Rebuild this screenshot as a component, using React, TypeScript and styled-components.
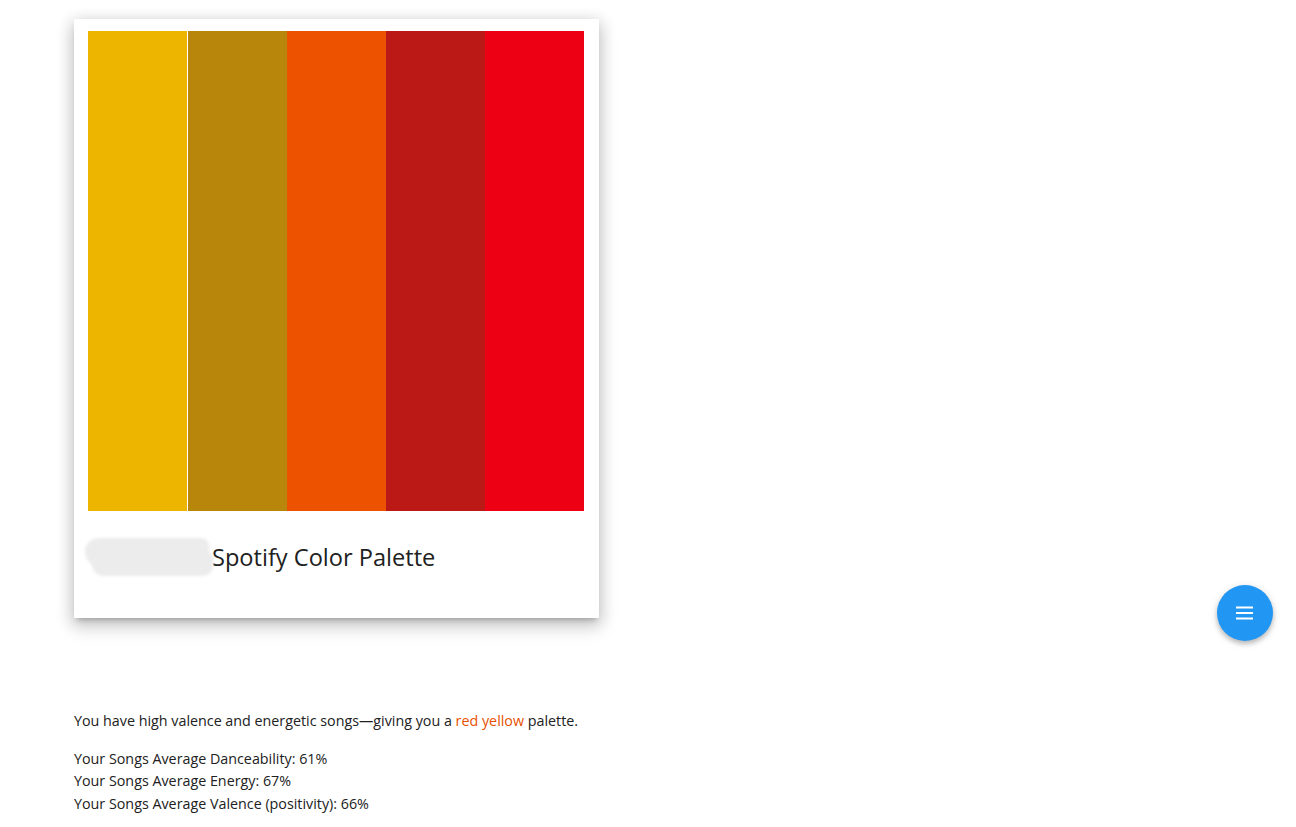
import styled, { createGlobalStyle } from "styled-components";

const GlobalStyle = createGlobalStyle`
  body {
    margin: 0;
    background: #ffffff;
    font-family: "Open Sans", "Noto Sans", sans-serif;
    color: #212121;
  }
`;

const Page = styled.div`
  padding: 19px 74px 0 74px;
`;

const Card = styled.div`
  width: 525px;
  box-sizing: border-box;
  padding: 12px 15px 0 14px;
  background: #fff;
  box-shadow: 0 8px 17px 2px rgba(0, 0, 0, 0.14), 0 3px 14px 2px rgba(0, 0, 0, 0.12),
    0 5px 5px -3px rgba(0, 0, 0, 0.2);
`;

const Palette = styled.div`
  display: flex;
  height: 480px;
`;

const Swatch = styled.div<{ $color: string; $divider?: boolean }>`
  flex: 1;
  background: ${(p) => p.$color};
  border-right: ${(p) => (p.$divider ? "1px solid #fff" : "none")};
`;

const TitleRow = styled.div`
  display: flex;
  align-items: center;
  height: 107px;
  padding-bottom: 16px;
  box-sizing: border-box;
  margin-left: -3px;
`;

const Redacted = styled.div`
  position: relative;
  width: 128px;
  height: 38px;
  margin-right: -1px;
  &::before,
  &::after {
    content: "";
    position: absolute;
    background: #ececec;
    filter: blur(1.5px);
  }
  &::before {
    left: 0;
    top: 0;
    width: 124px;
    height: 28px;
    border-radius: 14px 8px 6px 14px;
  }
  &::after {
    left: 7px;
    top: 14px;
    width: 121px;
    height: 24px;
    border-radius: 8px 6px 10px 12px;
  }
`;

const Title = styled.h2`
  margin: 0;
  font-family: "Open Sans", "Noto Sans", sans-serif;
  font-weight: 400;
  font-size: 23.6px;
  letter-spacing: 0;
  color: #212121;
`;

const Info = styled.div`
  margin-top: 92px;
  font-size: 14.3px;
  color: #212121;
`;

const Para = styled.p`
  margin: 0 0 15px 0;
  line-height: 22.5px;
`;

const Accent = styled.span`
  color: #e65100;
`;

const Fab = styled.button`
  position: fixed;
  left: 1217px;
  top: 585px;
  width: 56px;
  height: 56px;
  border-radius: 50%;
  border: none;
  background: #2196f3;
  display: flex;
  align-items: center;
  justify-content: center;
  box-shadow: 0 3px 5px rgba(0, 0, 0, 0.2), 0 2px 8px rgba(0, 0, 0, 0.14);
  cursor: pointer;
`;

const colors = ["#edb500", "#b8860b", "#ec5200", "#bb1916", "#ed0013"];

export default function App() {
  return (
    <>
      <GlobalStyle />
      <Page>
        <Card>
          <Palette>
            {colors.map((c, i) => (
              <Swatch key={c} $color={c} $divider={i === 0} />
            ))}
          </Palette>
          <TitleRow>
            <Redacted />
            <Title>Spotify Color Palette</Title>
          </TitleRow>
        </Card>
        <Info>
          <Para>
            You have high valence and energetic songs—giving you a <Accent>red yellow</Accent> palette.
          </Para>
          <Para>
            Your Songs Average Danceability: 61%
            <br />
            Your Songs Average Energy: 67%
            <br />
            Your Songs Average Valence (positivity): 66%
          </Para>
        </Info>
      </Page>
      <Fab aria-label="menu">
        <svg width="20" height="14" viewBox="0 0 20 14">
          <rect x="1" y="0.5" width="17" height="2" fill="#fff" />
          <rect x="1" y="6" width="17" height="2" fill="#fff" />
          <rect x="1" y="11.5" width="17" height="2" fill="#fff" />
        </svg>
      </Fab>
    </>
  );
}
